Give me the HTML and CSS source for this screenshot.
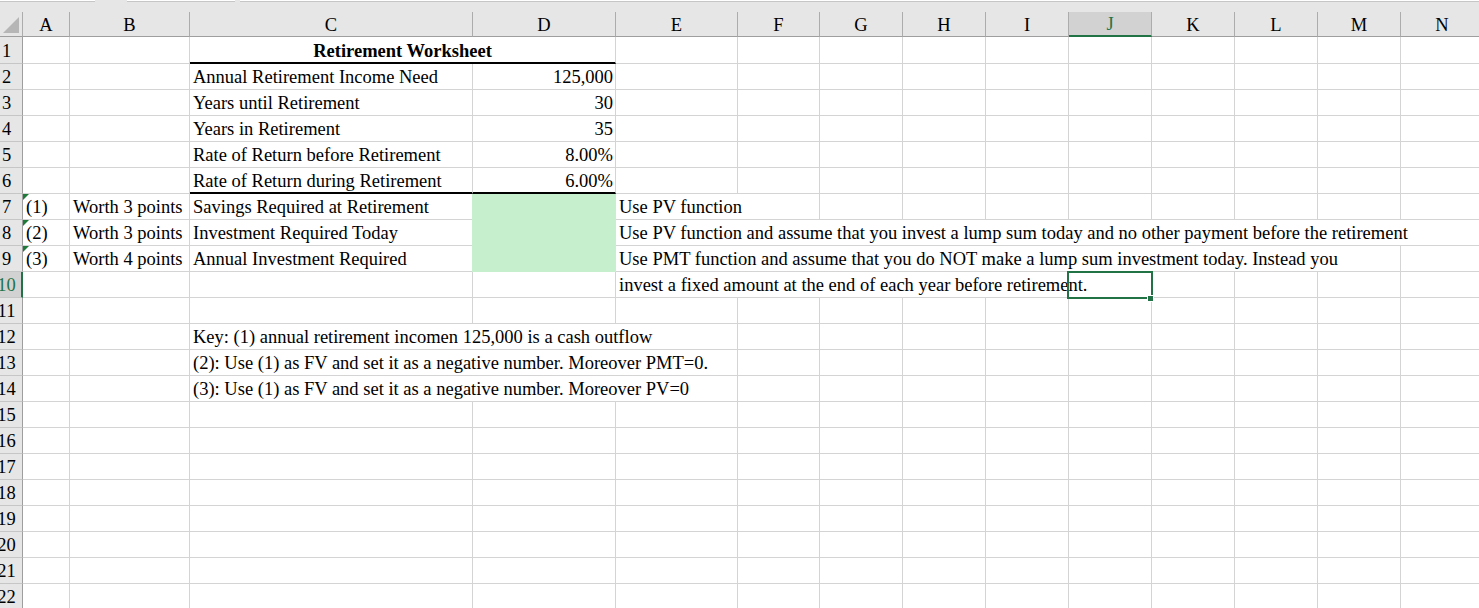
FILE: index.html
```html
<!doctype html>
<html lang="en">
  <head>
    <meta charset="UTF-8" />
    <meta name="viewport" content="width=device-width, initial-scale=1.0" />
    <title>Retirement Worksheet</title>
    <link rel="stylesheet" href="styles.css">
  </head>
  <body>
    <div class="workbook">
      <div class="bar-edge">
        <span class="edge-box name-box"></span>
        <span class="edge-box fx-box"></span>
        <span class="edge-box input-box"></span>
      </div>
      <div class="sheet" id="sheet">
        <div class="col-head" id="colHead">
          <div class="corner">
            <svg width="23" height="24" viewBox="0 0 23 24">
              <polygon points="19,5 19,21 3,21" fill="#b6b6b6" />
            </svg>
          </div>
        </div>
      </div>
    </div>

    <script>
      const COLS = "ABCDEFGHIJKLMN".split("");
      const ROW_COUNT = 22;
      const ACTIVE_ROW = 10;
      const ACTIVE_COL = "J";

      // cell contents keyed by row number
      const cells = {
        1: [{ col: "C", span: 2, text: "Retirement Worksheet", cls: "title under" }],
        2: [
          { col: "C", text: "Annual Retirement Income Need" },
          { col: "D", text: "125,000", cls: "num" },
        ],
        3: [
          { col: "C", text: "Years until Retirement" },
          { col: "D", text: "30", cls: "num" },
        ],
        4: [
          { col: "C", text: "Years in Retirement" },
          { col: "D", text: "35", cls: "num" },
        ],
        5: [
          { col: "C", text: "Rate of Return before Retirement" },
          { col: "D", text: "8.00%", cls: "num" },
        ],
        6: [
          { col: "C", text: "Rate of Return during Retirement", cls: "under" },
          { col: "D", text: "6.00%", cls: "num under" },
        ],
        7: [
          { col: "A", text: "(1)", cls: "flag" },
          { col: "B", text: "Worth 3 points" },
          { col: "C", text: "Savings Required at Retirement" },
          { col: "D", cls: "answer" },
          { col: "E", span: 2, text: "Use PV function" },
        ],
        8: [
          { col: "A", text: "(2)", cls: "flag" },
          { col: "B", text: "Worth 3 points" },
          { col: "C", text: "Investment Required Today" },
          { col: "D", cls: "answer" },
          {
            col: "E",
            span: 10,
            text: "Use PV function and assume that you invest a lump sum today and no other payment before the retirement",
          },
        ],
        9: [
          { col: "A", text: "(3)", cls: "flag" },
          { col: "B", text: "Worth 4 points" },
          { col: "C", text: "Annual Investment Required" },
          { col: "D", cls: "answer" },
          {
            col: "E",
            span: 9,
            text: "Use PMT function and assume that you do NOT make a lump sum investment today. Instead you",
          },
        ],
        10: [
          {
            col: "E",
            span: 5,
            text: "invest a fixed amount at the end of each year before retirement.",
          },
          { col: "J", cls: "selected" },
        ],
        12: [
          {
            col: "C",
            span: 3,
            text: "Key: (1) annual retirement incomen 125,000 is a cash outflow",
          },
        ],
        13: [
          {
            col: "C",
            span: 3,
            text: "(2): Use (1) as FV and set it as a negative number. Moreover PMT=0.",
          },
        ],
        14: [
          {
            col: "C",
            span: 3,
            text: "(3): Use (1) as FV and set it as a negative number. Moreover PV=0",
          },
        ],
      };

      const sheet = document.getElementById("sheet");
      const colHead = document.getElementById("colHead");

      COLS.forEach(function (c) {
        const head = document.createElement("div");
        head.className = "ch" + (c === ACTIVE_COL ? " active" : "");
        head.textContent = c;
        colHead.appendChild(head);
      });

      for (let r = 1; r <= ROW_COUNT; r++) {
        const row = document.createElement("div");
        row.className = "row" + (r === 1 ? " first" : "");

        const rh = document.createElement("div");
        rh.className = "rh" + (r === ACTIVE_ROW ? " active" : "");
        rh.innerHTML = "<span>" + r + "</span>";
        row.appendChild(rh);

        const specs = cells[r] || [];
        for (let i = 0; i < COLS.length; ) {
          const spec = specs.find((s) => s.col === COLS[i]) || {};
          const span = spec.span || 1;
          const cell = document.createElement("div");
          cell.className = "cell" + (spec.cls ? " " + spec.cls : "");
          if (span > 1) cell.style.gridColumn = "span " + span;
          if (spec.text) cell.textContent = spec.text;
          row.appendChild(cell);
          i += span;
        }

        sheet.appendChild(row);
      }
    </script>
  </body>
</html>
```

FILE: styles.css
```css
:root {
  --cols: 23px 47px 120px 283px 143px 122px 82px 83px 83px 83px 83px 83px 83px 83px 83px;
  --grid: #d4d4d4;
  --head: #e6e6e6;
  --head-line: #acacac;
  --active-head: #d2d2d2;
  --excel-green: #217346;
}
body {
  margin: 0;
  background: #fff;
  color: #000;
  font-family: "Liberation Serif", "Times New Roman", serif;
  font-size: 18.5px;
  overflow: hidden;
}
.workbook {
  width: 1484px;
}
.bar-edge {
  height: 12px;
  background: var(--head);
  display: flex;
  align-items: flex-start;
}
.edge-box {
  height: 1px;
  background: #fff;
  border-bottom: 1px solid #c6c6c6;
}
.name-box {
  width: 95px;
}
.fx-box {
  width: 108px;
  margin-left: 32px;
}
.input-box {
  flex: 1;
  margin-left: 5px;
}
.col-head,
.row {
  display: grid;
  grid-template-columns: var(--cols);
}
.col-head {
  height: 25px;
}
.row {
  height: 26px;
}
.row.first {
  height: 27px;
}
.corner,
.ch {
  box-sizing: border-box;
  background: var(--head);
  border-right: 1px solid var(--head-line);
  border-bottom: 1px solid #9e9e9e;
}
.corner svg {
  display: block;
}
.ch {
  display: flex;
  align-items: flex-end;
  justify-content: center;
  line-height: 22px;
}
.ch.active {
  background: var(--active-head);
  color: var(--excel-green);
  border-bottom: 2px solid var(--excel-green);
}
.rh {
  box-sizing: border-box;
  background: var(--head);
  border-right: 1px solid #9e9e9e;
  border-bottom: 1px solid #c6c6c6;
  overflow: hidden;
  display: flex;
  align-items: flex-end;
  padding-bottom: 1px;
  line-height: 22px;
}
.rh span {
  display: block;
  flex: none;
  width: 35px;
  margin-left: -11px;
  text-align: center;
}
.rh.active {
  background: var(--active-head);
  color: var(--excel-green);
  border-right: 2px solid var(--excel-green);
}
.cell {
  box-sizing: border-box;
  min-width: 0;
  border-right: 1px solid var(--grid);
  border-bottom: 1px solid var(--grid);
  padding: 0 3px 1px;
  display: flex;
  align-items: flex-end;
  line-height: 22px;
  white-space: nowrap;
}
.num {
  justify-content: flex-end;
  padding-right: 2px;
}
.title {
  font-weight: bold;
  justify-content: center;
}
/* heavy rule under a block; the text keeps its usual baseline */
.under {
  border-bottom: 2px solid #000;
  padding-bottom: 0;
}
.answer {
  background: #c6efce;
  border-color: #c6efce;
  box-shadow: -1px 0 0 #c6efce;
}
/* green error marker in the top-left corner */
.flag {
  position: relative;
}
.flag::before {
  content: "";
  position: absolute;
  top: 0;
  left: 0;
  border-top: 6px solid #1f7a3a;
  border-right: 6px solid transparent;
}
/* active cell outline and fill handle */
.selected {
  position: relative;
}
.selected::before {
  content: "";
  position: absolute;
  left: -2px;
  top: -1px;
  right: -2px;
  bottom: -2px;
  border: 2px solid var(--excel-green);
}
.selected::after {
  content: "";
  position: absolute;
  right: -3px;
  bottom: -5px;
  width: 5px;
  height: 5px;
  background: var(--excel-green);
  border: 1px solid #fff;
}
```
